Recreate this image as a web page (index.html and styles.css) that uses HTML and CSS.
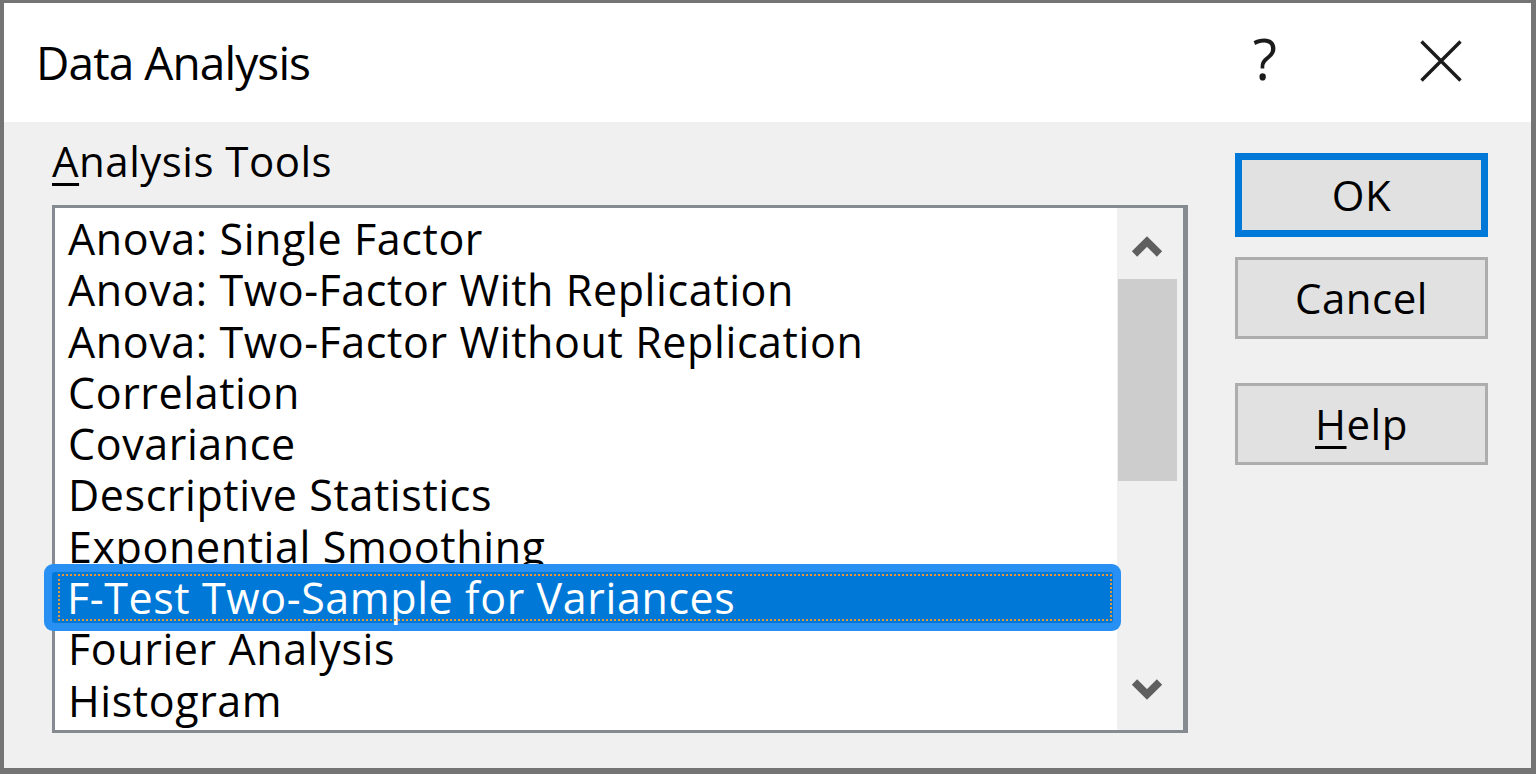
FILE: index.html
```html
<!DOCTYPE html>
<html lang="en">
<head>
<meta charset="utf-8">
<title>Data Analysis</title>
<link rel="stylesheet" href="styles.css">
</head>
<body>
<div class="dialog">
  <div class="titlebar">
    <span class="title">Data Analysis</span>
    <span class="help-glyph">?</span>
    <svg class="close" width="42" height="42" viewBox="0 0 42 42" aria-hidden="true">
      <path d="M1.5 1.5 L40.5 40.5 M40.5 1.5 L1.5 40.5" stroke="#1b1b1b" stroke-width="3.4" fill="none"/>
    </svg>
  </div>
  <div class="body">
    <div class="left">
      <div class="label"><u>A</u>nalysis Tools</div>
      <div class="listbox">
        <ul class="items">
          <li class="item">Anova: Single Factor</li>
          <li class="item">Anova: Two-Factor With Replication</li>
          <li class="item">Anova: Two-Factor Without Replication</li>
          <li class="item">Correlation</li>
          <li class="item">Covariance</li>
          <li class="item">Descriptive Statistics</li>
          <li class="item">Exponential Smoothing</li>
          <li class="item selected">F-Test Two-Sample for Variances</li>
          <li class="item">Fourier Analysis</li>
          <li class="item">Histogram</li>
        </ul>
        <div class="scrollbar">
          <div class="arrow up">
            <svg width="32" height="24" viewBox="0 0 32 24" aria-hidden="true">
              <path d="M3.5 20 L16 7.5 L28.5 20" stroke="#5f5f5f" stroke-width="7.5" fill="none" stroke-linejoin="miter"/>
            </svg>
          </div>
          <div class="track">
            <div class="thumb"></div>
          </div>
          <div class="arrow down">
            <svg width="32" height="24" viewBox="0 0 32 24" aria-hidden="true">
              <path d="M3.5 4 L16 16.5 L28.5 4" stroke="#5f5f5f" stroke-width="7.5" fill="none" stroke-linejoin="miter"/>
            </svg>
          </div>
        </div>
      </div>
    </div>
    <div class="right">
      <button class="btn default">OK</button>
      <button class="btn cancel">Cancel</button>
      <button class="btn help"><u>H</u>elp</button>
    </div>
  </div>
</div>
</body>
</html>
```

FILE: styles.css
```css
html, body {
  margin: 0;
  padding: 0;
  background: #f0f0f0;
}

.dialog {
  width: 1536px;
  height: 774px;
  box-sizing: border-box;
  border-style: solid;
  border-color: #747474;
  border-width: 3px 5px 6px 4px;
  display: flex;
  flex-direction: column;
  font-family: "Open Sans", "Noto Sans", sans-serif;
  font-weight: 500;
  color: #000;
  overflow: hidden;
}

.titlebar {
  height: 119px;
  flex: none;
  background: #fff;
  display: flex;
  align-items: center;
  padding-left: 32px;
  padding-right: 69px;
}

.title {
  font-size: 46px;
  letter-spacing: -0.9px;
  line-height: 1;
  margin-top: -2px;
}

.help-glyph {
  margin-left: auto;
  font-size: 56px;
  line-height: 1;
  margin-top: -10px;
  color: #1b1b1b;
}

.close {
  margin-left: 143px;
  margin-top: -4px;
}

.body {
  flex: 1;
  display: flex;
  align-items: flex-start;
  background: #f0f0f0;
}

.left {
  padding-top: 15px;
  padding-left: 48px;
}

.label {
  font-size: 42px;
  line-height: 48px;
  letter-spacing: 0.5px;
  height: 48px;
  margin-bottom: 20px;
}

.label u {
  text-underline-offset: 6px;
  text-decoration-thickness: 3px;
}

.listbox {
  width: 1136px;
  height: 528px;
  box-sizing: border-box;
  border-style: solid;
  border-color: #868a91;
  border-width: 3px 5px 3px 3px;
  background: #fff;
  display: flex;
}

.items {
  list-style: none;
  margin: 0;
  padding: 5px 0 0 0;
  width: 1062px;
  flex: none;
}

.item {
  position: relative;
  height: 51.3px;
  line-height: 51.3px;
  padding-left: 13px;
  font-size: 43px;
  letter-spacing: 0.6px;
  white-space: nowrap;
}

.item.selected {
  background: #0078d7;
  color: #fff;
  margin-left: -3px;
  margin-right: 4px;
  padding-left: 15px;
  border-radius: 3px;
  box-shadow: 0 0 0 8px #2790f2;
  z-index: 1;
}

.item.selected::after {
  content: "";
  position: absolute;
  left: 6px;
  right: 1px;
  top: 2px;
  bottom: 2px;
  border: 2px dotted #e4963a;
}

.scrollbar {
  flex: none;
  width: 66px;
  background: #f0f0f0;
  display: flex;
  flex-direction: column;
}

.arrow {
  display: flex;
  align-items: center;
  justify-content: center;
  width: 60px;
}

.arrow.up {
  height: 71px;
  padding-top: 4px;
  box-sizing: border-box;
}

.arrow.down {
  height: 74px;
  padding-bottom: 6px;
  box-sizing: border-box;
}

.track {
  flex: 1;
  display: flex;
  flex-direction: column;
}

.thumb {
  margin-left: 1px;
  width: 59px;
  height: 202px;
  background: #cdcdcd;
}

.right {
  padding-top: 31px;
  padding-left: 47px;
  display: flex;
  flex-direction: column;
}

.btn {
  width: 253px;
  height: 82px;
  box-sizing: border-box;
  background: #e1e1e1;
  border: 3px solid #adadad;
  font-family: "Open Sans", "Noto Sans", sans-serif;
  font-weight: 500;
  font-size: 42px;
  letter-spacing: 0.5px;
  color: #000;
  padding: 0 0 2px 0;
  margin: 0;
}

.btn.default {
  height: 84px;
  border: 7px solid #0078d7;
}

.btn.cancel {
  margin-top: 20px;
}

.btn.help {
  margin-top: 44px;
}

.btn u {
  text-underline-offset: 6px;
  text-decoration-thickness: 3px;
}
```
